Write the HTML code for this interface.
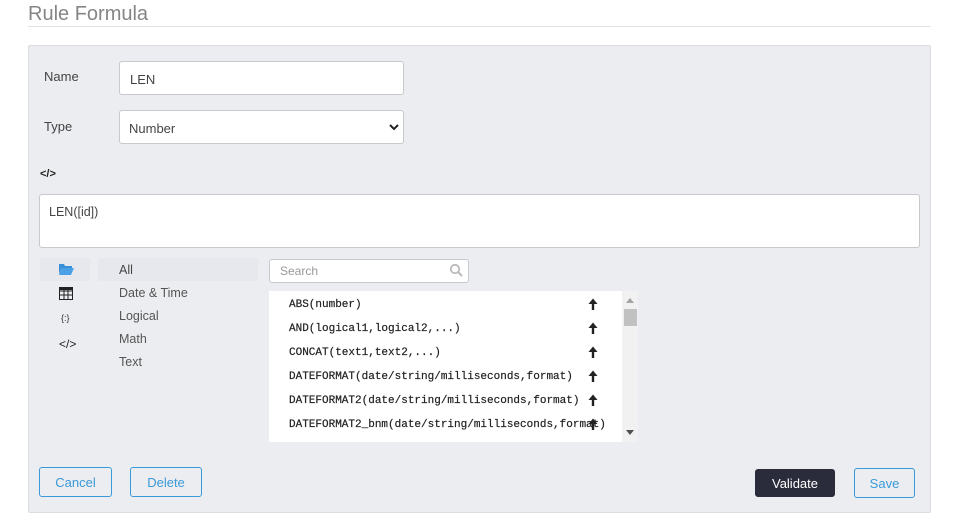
<!DOCTYPE html>
<html><head><style>
*{box-sizing:border-box;margin:0;padding:0}
body{width:953px;height:524px;background:#fff;font-family:"Liberation Sans",sans-serif;position:relative;overflow:hidden;color:#333}
.a{position:absolute}
h1{position:absolute;left:28px;top:3px;font-size:20px;font-weight:normal;color:#858585}
.line{left:28px;top:26px;width:903px;height:1px;background:#e3e3e3}
.panel{left:28px;top:45px;width:903px;height:468px;background:#ecedf0;border:1px solid #dcdde0;border-radius:2px}
.lbl{font-size:13px;color:#444}
.inp{background:#fff;border:1px solid #c8c9cc;border-radius:3px;font-size:13px;color:#444}
.mono{font-family:"Liberation Mono",monospace;font-size:11px;color:#222;-webkit-text-stroke:0.2px #222}
.btn{border:1px solid #3a9ad9;border-radius:3px;color:#3a9ad9;font-size:13px;text-align:center;line-height:29px}
.cat{font-size:12.5px;color:#555;left:119px}
.arr{left:588px;width:10px;height:12px}
</style></head><body>
<h1>Rule Formula</h1>
<div class="a line"></div>
<div class="a panel"></div>
<div class="a lbl" style="left:44px;top:69px">Name</div>
<div class="a inp" style="left:119px;top:61px;width:285px;height:34px;padding:10px 10px">LEN</div>
<div class="a lbl" style="left:44px;top:119px">Type</div>
<div class="a inp" style="left:119px;top:110px;width:285px;height:34px;padding:10px 9px">Number</div>
<svg class="a" style="left:389px;top:123px" width="10" height="8" viewBox="0 0 10 8"><path d="M1 2l4 4 4-4" stroke="#222" stroke-width="2" fill="none"/></svg>
<div class="a" style="left:40px;top:168px;font-size:11px;font-weight:bold;color:#222">&lt;/&gt;</div>
<div class="a inp" style="left:39px;top:194px;width:881px;height:54px;padding:10px 9px;font-size:12.5px">LEN([id])</div>
<div class="a" style="left:40px;top:258px;width:50px;height:23px;background:#e6e8ed"></div>
<svg class="a" style="left:59px;top:263px" width="15" height="12" viewBox="0 0 15 12"><path d="M0 1h5l1 2h7v2H3L0 11z" fill="#3a8fd9"/><path d="M3 5h12l-3 7H0z" fill="#4aa0e6"/></svg>
<svg class="a" style="left:59px;top:287px" width="14" height="13" viewBox="0 0 14 13"><rect x="0.5" y="0.5" width="13" height="12" fill="none" stroke="#222"/><path d="M0 4h14M0 8h14M5 0v13M9 0v13" stroke="#222"/><rect x="0" y="0" width="14" height="3" fill="#222"/></svg>
<div class="a" style="left:61px;top:313px;font-size:9px;color:#333">{:}</div>
<div class="a" style="left:59px;top:337px;font-size:12px;color:#222">&lt;/&gt;</div>
<div class="a" style="left:98px;top:258px;width:160px;height:23px;background:#e6e8ed"></div>
<div class="a cat" style="top:263px;color:#444">All</div>
<div class="a cat" style="top:286px">Date &amp; Time</div>
<div class="a cat" style="top:309px">Logical</div>
<div class="a cat" style="top:332px">Math</div>
<div class="a cat" style="top:355px">Text</div>
<div class="a inp" style="left:269px;top:259px;width:200px;height:24px;padding:4px 10px;font-size:12px;color:#999">Search</div>
<svg class="a" style="left:449px;top:263px" width="14" height="14" viewBox="0 0 14 14"><circle cx="6" cy="6" r="4.2" stroke="#bbb" stroke-width="1.8" fill="none"/><path d="M9 9l4 4" stroke="#bbb" stroke-width="2"/></svg>
<div class="a" style="left:269px;top:291px;width:353px;height:151px;background:#fff"></div>
<div class="a" style="left:622px;top:291px;width:16px;height:151px;background:#f1f1f1"></div>
<div class="a" style="left:624px;top:309px;width:13px;height:17px;background:#c1c1c1"></div>
<svg class="a" style="left:626px;top:298px" width="8" height="5"><path d="M0 5L4 0L8 5z" fill="#a3a3a3"/></svg>
<svg class="a" style="left:626px;top:430px" width="8" height="5"><path d="M0 0L4 5L8 0z" fill="#505050"/></svg>
<div class="a mono" style="left:289px;top:299px">ABS(number)</div>
<div class="a mono" style="left:289px;top:323px">AND(logical1,logical2,...)</div>
<div class="a mono" style="left:289px;top:347px">CONCAT(text1,text2,...)</div>
<div class="a mono" style="left:289px;top:371px">DATEFORMAT(date/string/milliseconds,format)</div>
<div class="a mono" style="left:289px;top:395px">DATEFORMAT2(date/string/milliseconds,format)</div>
<div class="a mono" style="left:289px;top:419px">DATEFORMAT2_bnm(date/string/milliseconds,format)</div>
<svg class="a arr" style="top:298px" viewBox="0 0 10 12"><path d="M5 4v8" stroke="#222" stroke-width="2.4"/><path d="M0.5 6L5 0.5 9.5 6z" fill="#222"/></svg>
<svg class="a arr" style="top:322px" viewBox="0 0 10 12"><path d="M5 4v8" stroke="#222" stroke-width="2.4"/><path d="M0.5 6L5 0.5 9.5 6z" fill="#222"/></svg>
<svg class="a arr" style="top:346px" viewBox="0 0 10 12"><path d="M5 4v8" stroke="#222" stroke-width="2.4"/><path d="M0.5 6L5 0.5 9.5 6z" fill="#222"/></svg>
<svg class="a arr" style="top:370px" viewBox="0 0 10 12"><path d="M5 4v8" stroke="#222" stroke-width="2.4"/><path d="M0.5 6L5 0.5 9.5 6z" fill="#222"/></svg>
<svg class="a arr" style="top:394px" viewBox="0 0 10 12"><path d="M5 4v8" stroke="#222" stroke-width="2.4"/><path d="M0.5 6L5 0.5 9.5 6z" fill="#222"/></svg>
<svg class="a arr" style="top:418px" viewBox="0 0 10 12"><path d="M5 4v8" stroke="#222" stroke-width="2.4"/><path d="M0.5 6L5 0.5 9.5 6z" fill="#222"/></svg>
<div class="a btn" style="left:39px;top:467px;width:73px;height:30px">Cancel</div>
<div class="a btn" style="left:130px;top:467px;width:72px;height:30px">Delete</div>
<div class="a btn" style="left:755px;top:469px;width:80px;height:28px;line-height:27px;background:#2a2b3b;border-color:#2a2b3b;color:#fff">Validate</div>
<div class="a btn" style="left:854px;top:468px;width:61px;height:30px">Save</div>
</body></html>
